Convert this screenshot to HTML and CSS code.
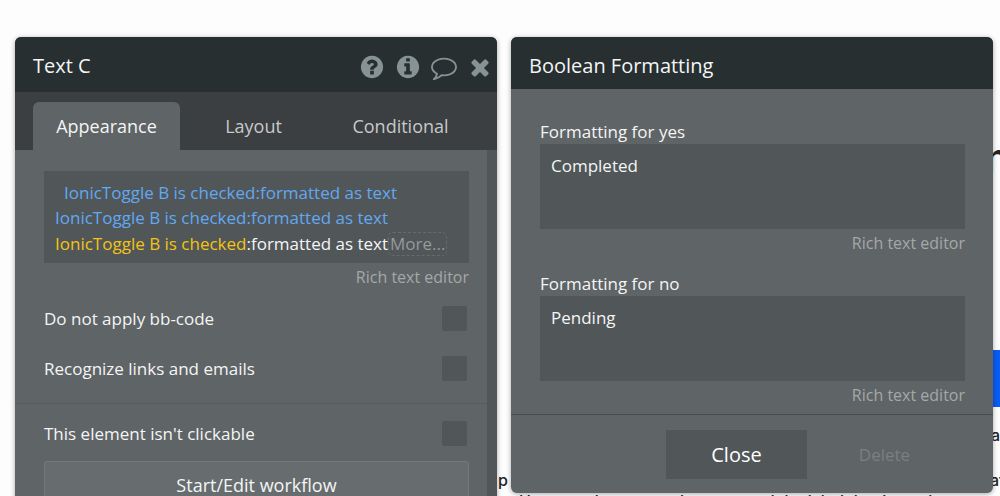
FILE: index.html
```html
<!DOCTYPE html>
<html lang="en">
<head>
<meta charset="utf-8">
<title>Property editor</title>
<link rel="stylesheet" href="styles.css">
</head>
<body>
<div class="canvas" aria-hidden="true">
  <span class="canvas-heading">n</span>
  <span class="canvas-button"></span>
  <span class="canvas-text canvas-text-a">a</span>
  <span class="canvas-text canvas-text-at">at</span>
  <span class="canvas-text canvas-text-p">p</span>
  <span class="canvas-text canvas-text-last">Have an element on the page and the label that is on the</span>
</div>
<main class="workspace">
  <section class="panel" aria-label="Text C">
    <header class="panel-header">
      <h1 class="panel-title">Text C</h1>
      <div class="tools">
        <button class="tool" type="button" aria-label="Help"><svg viewBox="0 0 1792 1792"><path d="M1024 1376v-192q0-14-9-23t-23-9h-192q-14 0-23 9t-9 23v192q0 14 9 23t23 9h192q14 0 23-9t9-23zm256-672q0-88-55.500-163t-138.500-116-170-41q-243 0-371 213-15 24 8 42l132 100q7 6 19 6 16 0 25-12 53-68 86-92 34-24 86-24 48 0 85.500 26t37.500 59q0 38-20 61t-68 45q-63 28-115.500 86.500t-52.500 125.500v36q0 14 9 23t23 9h192q14 0 23-9t9-23q0-19 21.500-49.500t54.500-49.500q32-18 49-28.500t46-35 44.500-48 28-60.500 12.500-81zm384 192q0 209-103 385.500t-279.500 279.500-385.500 103-385.500-103-279.500-279.500-103-385.500 103-385.500 279.500-279.500 385.500-103 385.500 103 279.500 279.500 103 385.500z"/></svg></button>
        <button class="tool" type="button" aria-label="Info"><svg viewBox="0 0 1792 1792"><path d="M1152 1376v-160q0-14-9-23t-23-9h-96v-512q0-14-9-23t-23-9h-320q-14 0-23 9t-9 23v160q0 14 9 23t23 9h96v320h-96q-14 0-23 9t-9 23v160q0 14 9 23t23 9h448q14 0 23-9t9-23zm-128-896v-160q0-14-9-23t-23-9h-192q-14 0-23 9t-9 23v160q0 14 9 23t23 9h192q14 0 23-9t9-23zm640 416q0 209-103 385.500t-279.500 279.500-385.500 103-385.500-103-279.500-279.500-103-385.500 103-385.500 279.500-279.500 385.500-103 385.500 103 279.500 279.500 103 385.500z"/></svg></button>
        <button class="tool" type="button" aria-label="Comment"><svg viewBox="0 0 1792 1792"><path d="M896 384q-204 0-381.500 69.500t-282 187.500-104.500 255q0 112 71.500 213.500t201.500 175.500l87 50-27 96q-24 91-70 172 152-63 275-171l43-38 57 6q69 8 130 8 204 0 381.500-69.500t282-187.500 104.500-255-104.500-255-282-187.500-381.500-69.500zm896 512q0 174-120 321.500t-326 233-450 85.500q-70 0-145-8-198 175-460 242-49 14-114 22h-5q-15 0-27-10.500t-16-27.500v-1q-3-4-.5-12t2-10 4.500-9.500l6-9 7-8.500 8-9q7-8 31-34.500t34.500-38 31-39.500 32.500-51 27-59 26-76q-157-89-247.500-220t-90.500-281q0-174 120-321.500t326-233 450-85.500 450 85.500 326 233 120 321.500z"/></svg></button>
        <button class="tool" type="button" aria-label="Close panel"><svg viewBox="0 0 1792 1792"><path d="M1490 1322q0 40-28 68l-136 136q-28 28-68 28t-68-28l-294-294-294 294q-28 28-68 28t-68-28l-136-136q-28-28-28-68t28-68l294-294-294-294q-28-28-28-68t28-68l136-136q28-28 68-28t68 28l294 294 294-294q28-28 68-28t68 28l136 136q28 28 28 68t-28 68l-294 294 294 294q28 28 28 68z"/></svg></button>
      </div>
    </header>
    <nav class="tabs" role="tablist">
      <button class="tab tab-active" type="button" role="tab" aria-selected="true">Appearance</button>
      <button class="tab" type="button" role="tab" aria-selected="false">Layout</button>
      <button class="tab" type="button" role="tab" aria-selected="false">Conditional</button>
    </nav>
    <div class="properties">
      <div class="group">
        <div class="composer">
          <div class="expression expression-first">IonicToggle B is checked:formatted as text</div>
          <div class="expression">IonicToggle B is checked:formatted as text</div>
          <div class="expression expression-current"><span class="source">IonicToggle B is checked</span>:formatted as text<button class="more" type="button">More...</button></div>
        </div>
        <a class="editor-link" href="#">Rich text editor</a>
        <div class="options">
          <label class="option">Do not apply bb-code<input class="check" type="checkbox"></label>
          <label class="option">Recognize links and emails<input class="check" type="checkbox"></label>
        </div>
      </div>
      <div class="group group-workflow">
        <label class="option">This element isn't clickable<input class="check" type="checkbox"></label>
        <button class="workflow" type="button">Start/Edit workflow</button>
      </div>
    </div>
  </section>

  <section class="panel" aria-label="Boolean Formatting">
    <header class="panel-header panel-header-dialog">
      <h2 class="panel-title">Boolean Formatting</h2>
    </header>
    <div class="fields">
      <div class="field">
        <label class="field-label" for="yes">Formatting for yes</label>
        <textarea class="field-input" id="yes">Completed</textarea>
        <a class="editor-link" href="#">Rich text editor</a>
      </div>
      <div class="field">
        <label class="field-label" for="no">Formatting for no</label>
        <textarea class="field-input" id="no">Pending</textarea>
        <a class="editor-link" href="#">Rich text editor</a>
      </div>
    </div>
    <footer class="dialog-footer">
      <button class="close" type="button">Close</button>
      <button class="delete" type="button" disabled>Delete</button>
    </footer>
  </section>
</main>
</body>
</html>
```
FILE: styles.css
```css
* { box-sizing: border-box; }

body {
  margin: 0;
  height: 100vh;
  overflow: hidden;
  position: relative;
  background: #fdfdfd;
  color: #f4f5f5;
  font: 17px/24px "Open Sans", "Noto Sans", sans-serif;
}

button, textarea { font: inherit; color: inherit; border: 0; padding: 0; background: none; }

/* Page being edited, visible behind the floating panels */
.canvas { position: absolute; inset: 0; overflow: hidden; color: #222428; font-family: Inter, sans-serif; }
.canvas > * { position: absolute; white-space: nowrap; }
.canvas-heading { left: 985px; top: 134px; font-size: 40px; line-height: 48px; font-weight: 600; }
.canvas-button { left: 960px; top: 350px; width: 80px; height: 57px; background: #0a5cf5; }
.canvas-text { font-size: 16px; line-height: 20px; font-weight: 500; }
.canvas-text-a { left: 991px; top: 425px; }
.canvas-text-at { left: 990px; top: 470px; }
.canvas-text-p { left: 498px; top: 470px; }
.canvas-text-last { left: 519px; top: 491px; }

.workspace {
  position: relative;
  display: grid;
  grid-template-columns: 1fr 1fr;
  gap: 14px;
  align-items: start;
  padding: 37px 7px 0 15px;
}

.panel {
  overflow: hidden;
  border-radius: 6px;
  background: #5f6466;
  box-shadow: 0 1px 5px rgba(0, 0, 0, 0.35);
}

.panel-header {
  display: flex;
  align-items: center;
  justify-content: space-between;
  height: 55px;
  padding: 3px 4px 0 18px;
  background: #272f31;
}
.panel-header-dialog { height: 52px; padding-top: 6px; }
.panel-title { margin: 0; font-size: 20px; line-height: 28px; font-weight: 400; }

.tools { display: flex; gap: 10px; padding-top: 2px; }
.tool { width: 26px; height: 26px; }
.tool svg { display: block; fill: #879295; }

.tabs {
  display: grid;
  grid-template-columns: repeat(3, 147px);
  height: 58px;
  padding: 10px 18px 0;
  background: #3b3f41;
}
.tab { font-size: 18px; color: #c7c9ca; border-radius: 6px 6px 0 0; }
.tab-active { background: #5f6466; color: #f4f5f5; }

.properties { border-right: 10px solid #515658; }
.group { padding: 21px 18px 22px 29px; }
.group-workflow { padding-top: 17px; border-top: 1px solid #565b5d; }

.composer { padding: 9px 11px 6px; background: #515658; }
.expression { height: 26px; line-height: 26px; color: #62a8f2; white-space: nowrap; }
.expression-first { padding-left: 9px; height: 25px; }
.expression-current { color: #f4f5f5; }
.source { color: #f3c413; }
.more { border: 1px dashed #666b6d; border-radius: 5px; padding: 0 1px; line-height: 22px; color: #96999a; }

.editor-link {
  display: block;
  font-size: 16px;
  line-height: 28px;
  color: #a5a8a9;
  text-align: right;
  text-decoration: none;
}

.options { display: grid; gap: 25px; padding-top: 15px; }
.option { display: flex; align-items: center; justify-content: space-between; padding-right: 2px; }
.check { appearance: none; width: 25px; height: 25px; margin: 0; border-radius: 2px; background: #515658; }
.workflow {
  display: block;
  width: 100%;
  height: 48px;
  margin-top: 15px;
  border: 1px solid #747a7b;
  border-radius: 3px;
  background: #676c6e;
  font-size: 18px;
}

.fields { display: grid; gap: 15px; padding: 31px 28px 5px 29px; }
.field-label { display: block; }
.field-input { display: block; width: 100%; height: 85px; padding: 10px 11px; resize: none; outline: 0; background: #515658; }

.dialog-footer {
  display: grid;
  grid-template-columns: 1fr 141px 1fr;
  align-items: center;
  padding: 15px 31px 14px 0;
  border-top: 1px solid #4b4b4c;
}
.close { grid-column: 2; height: 49px; background: #515658; color: #fff; font-size: 20px; }
.delete { color: #7b7f81; }
```
